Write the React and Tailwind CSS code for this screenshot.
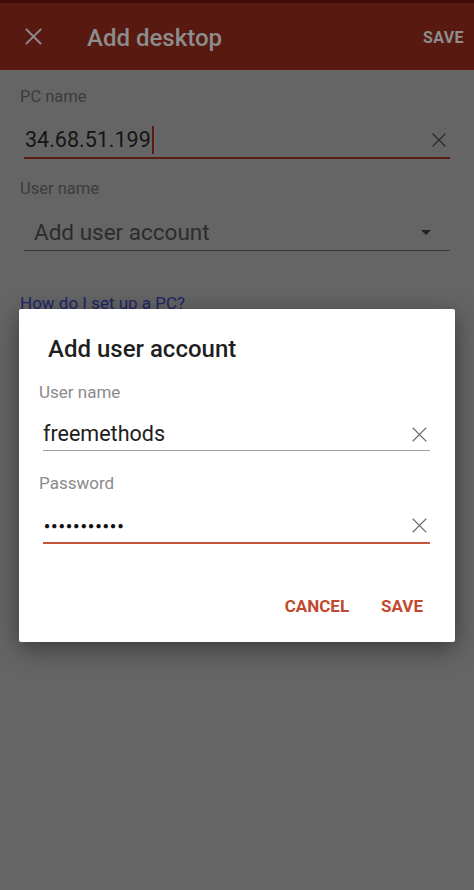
import React from 'react';

function CloseIcon({ className, width = 1.6 }) {
    return (
        <svg viewBox="0 0 24 24" className={className} fill="none" stroke="currentColor" strokeWidth={width} strokeLinecap="square">
            <path d="M4 4 L20 20 M20 4 L4 20" />
        </svg>
    );
}

export default function App() {
    return (
        <div className="relative h-[890px] w-[474px] overflow-hidden bg-[#656565]" style={{ fontFamily: 'Roboto, "Liberation Sans", sans-serif' }}>
            {/* Status strip + toolbar (dimmed) */}
            <div className="h-[3px] bg-[#3e0d07]" />
            <div className="flex h-[67px] items-center bg-[#581a10] pl-[23px] pr-[10px]">
                <CloseIcon className="h-[21px] w-[21px] text-[#8a8a8a]" width={2.2} />
                <h1 className="ml-[43px] mt-[3px] text-[24px] font-medium text-[#8d8d8d]">Add desktop</h1>
                <span className="ml-auto mt-[2px] text-[16px] font-bold tracking-wide text-[#8d8d8d]">SAVE</span>
            </div>

            {/* Form behind the dialog */}
            <div className="pl-[20px] pr-[20px] pt-[15px]">
                <p className="text-[16.5px] text-[#3c3c3c]">PC name</p>
                <div className="mr-[4px] ml-[4px] mt-[13px] flex h-[36px] items-center border-b-2 border-[#5a1b10] pl-[1px] pr-[2px]">
                    <span className="text-[21.5px] text-[#151515]">34.68.51.199</span>
                    <span className="ml-[1px] h-[28px] w-[2px] bg-[#5a1b10]" />
                    <CloseIcon className="ml-auto h-[18px] w-[18px] text-[#262626]" />
                </div>
                <p className="mt-[18px] text-[16.5px] text-[#3c3c3c]">User name</p>
                <div className="mr-[4px] ml-[4px] mt-[14px] flex h-[35px] items-center border-b border-[#3a3a3a] pl-[10px] pr-[19px]">
                    <span className="text-[22.5px] text-[#2c2c2c]">Add user account</span>
                    <svg viewBox="0 0 10 5" className="ml-auto h-[5px] w-[10px] text-[#232323]" fill="currentColor">
                        <path d="M0 0 L10 0 L5 5 Z" />
                    </svg>
                </div>
                <p className="mt-[40px] text-[17px] text-[#1f2468]">How do I set up a PC?</p>
            </div>

            {/* Modal dialog */}
            <div className="absolute left-[19px] top-[309px] w-[436px] rounded-[2px] bg-white pb-[24px] pl-[20px] pr-[25px] pt-[25px] shadow-[0_6px_24px_rgba(0,0,0,0.45)]">
                <h2 className="pl-[9px] text-[24px] font-medium leading-[30px] text-[#1f1f1f]">Add user account</h2>
                <p className="mt-[18px] text-[17px] leading-[20px] text-[#8a8a8a]">User name</p>
                <div className="ml-[4px] mt-[16px] flex h-[33px] items-center border-b border-[#a0a0a0] pr-[1px]">
                    <span className="text-[21.5px] text-[#202020]">freemethods</span>
                    <CloseIcon className="ml-auto h-[19px] w-[19px] text-[#6a6a6a]" />
                </div>
                <p className="mt-[22px] text-[17px] leading-[20px] text-[#8a8a8a]">Password</p>
                <div className="ml-[4px] mt-[16px] flex h-[35px] items-center border-b-2 border-[#c4543a] pr-[1px]">
                    <span className="pl-[1px] text-[10px] tracking-[1.3px] text-[#111]">●●●●●●●●●●●</span>
                    <CloseIcon className="ml-auto h-[19px] w-[19px] text-[#6a6a6a]" />
                </div>
                <div className="mt-[50px] flex justify-end gap-[32px] pr-[7px]">
                    <button className="text-[17px] font-bold leading-[24px] text-[#bf4a30]">CANCEL</button>
                    <button className="text-[17px] font-bold leading-[24px] text-[#bf4a30]">SAVE</button>
                </div>
            </div>
        </div>
    );
}
